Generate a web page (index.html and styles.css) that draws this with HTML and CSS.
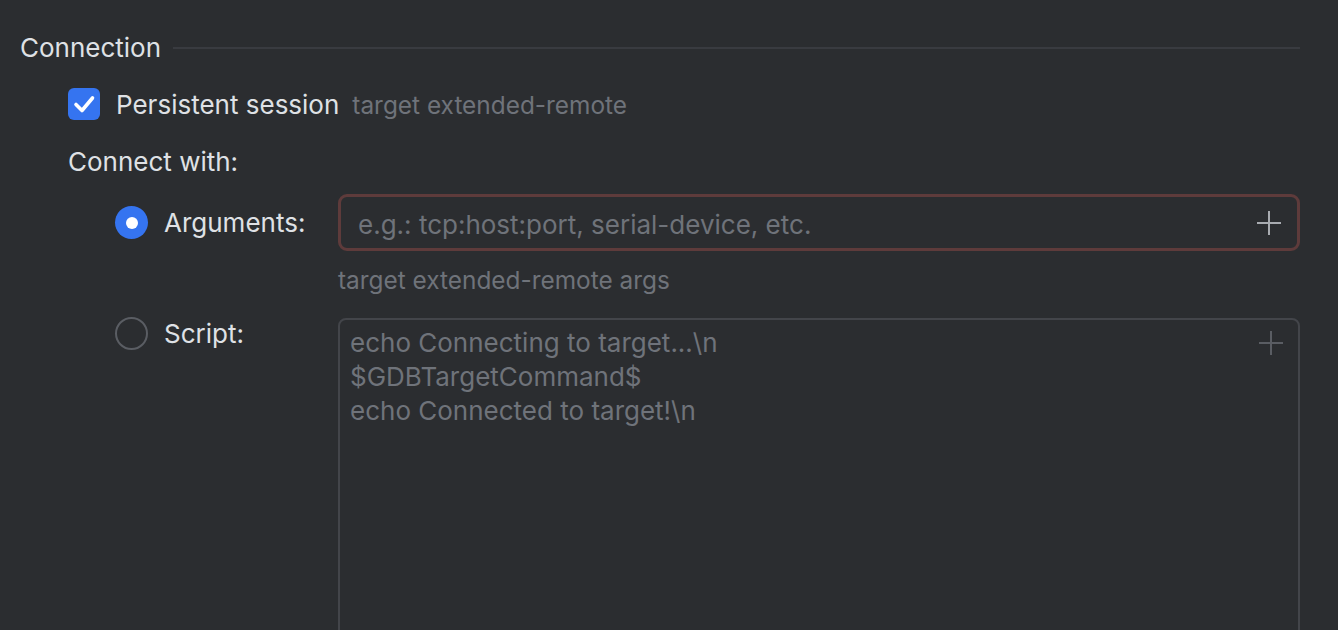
FILE: index.html
```html
<!DOCTYPE html>
<html lang="en">
<head>
    <meta charset="UTF-8">
    <meta name="viewport" content="width=device-width, initial-scale=1.0">
    <title>Connection</title>
    <link rel="stylesheet" href="styles.css">
</head>
<body>
    <div class="section">
        <div class="section-title">
            <span>Connection</span>
            <div class="separator"></div>
        </div>

        <div class="options">
            <label class="check-row">
                <span class="checkbox">
                    <svg width="32" height="32" viewBox="0 0 32 32">
                        <polyline points="8,16.5 14,22.5 24.5,10" fill="none" stroke="#fff" stroke-width="3.6" stroke-linecap="round" stroke-linejoin="round"/>
                    </svg>
                </span>
                <span class="label">Persistent session</span>
                <span class="hint">target extended-remote</span>
            </label>

            <div class="connect-label">Connect with:</div>

            <div class="connect">
                <label class="radio-row">
                    <span class="radio checked"></span>
                    <span class="label">Arguments:</span>
                </label>
                <div class="field-col">
                    <div class="input error">
                        <span class="placeholder">e.g.: tcp:host:port, serial-device, etc.</span>
                        <svg class="plus" width="24" height="24" viewBox="0 0 24 24">
                            <path d="M12 0V24M0 12H24" stroke="currentColor" stroke-width="2"/>
                        </svg>
                    </div>
                    <div class="field-hint">target extended-remote args</div>
                </div>

                <label class="radio-row script-row">
                    <span class="radio"></span>
                    <span class="label">Script:</span>
                </label>
                <div class="textarea">
                    <div class="lines">
                        <div>echo Connecting to target...\n</div>
                        <div>$GDBTargetCommand$</div>
                        <div>echo Connected to target!\n</div>
                    </div>
                    <svg class="plus" width="24" height="24" viewBox="0 0 24 24">
                        <path d="M12 0V24M0 12H24" stroke="currentColor" stroke-width="2"/>
                    </svg>
                </div>
            </div>
        </div>
    </div>
</body>
</html>
```

FILE: styles.css
```css
html, body {
    margin: 0;
    padding: 0;
    height: 100%;
    overflow: hidden;
}
body {
    background-color: #2b2d30;
    color: #dfe1e5;
    font-family: Inter, "Noto Sans", sans-serif;
    font-size: 26px;
}
.section {
    padding: 30px 38px 0 20px;
}
.section-title {
    display: flex;
    align-items: center;
    gap: 12px;
    height: 34px;
}
.separator {
    flex: 1;
    height: 2px;
    background-color: #393b40;
    margin-top: 2px;
}
.options {
    padding-left: 48px;
}
.check-row {
    display: flex;
    align-items: center;
    height: 34px;
    margin-top: 23px;
}
.checkbox {
    width: 32px;
    height: 32px;
    border-radius: 6px;
    background-color: #3574f0;
    display: flex;
}
.check-row .label {
    margin-left: 16px;
}
.hint {
    margin-left: 13px;
    margin-top: 2px;
    color: #6f737a;
    font-size: 24.4px;
}
.connect-label {
    margin-top: 24px;
    height: 34px;
    line-height: 34px;
}
.connect {
    display: grid;
    grid-template-columns: 223px 1fr;
    padding-left: 47px;
    margin-top: 15px;
}
.radio-row {
    display: flex;
    align-items: center;
    height: 57px;
}
.radio {
    width: 33px;
    height: 33px;
    box-sizing: border-box;
    border-radius: 50%;
    border: 2px solid #5a5d63;
    display: flex;
    align-items: center;
    justify-content: center;
}
.radio.checked {
    border: none;
    background-color: #3574f0;
}
.radio.checked::after {
    content: "";
    width: 12px;
    height: 12px;
    border-radius: 50%;
    background-color: #fff;
}
.radio-row .label {
    margin-left: 16px;
}
.script-row {
    height: 34px;
    margin-top: -2px;
}
.input {
    height: 57px;
    box-sizing: border-box;
    border: 3px solid #5e3b3b;
    border-radius: 9px;
    display: flex;
    align-items: center;
    padding: 0 16px 0 17px;
}
.placeholder {
    flex: 1;
    color: #6f737a;
    padding-top: 3px;
}
.input .plus {
    color: #a8abb0;
}
.field-hint {
    color: #6f737a;
    font-size: 24.4px;
    height: 34px;
    line-height: 34px;
    margin: 12px 0 21px 0;
}
.textarea {
    height: 400px;
    box-sizing: border-box;
    border: 2px solid #43454a;
    border-radius: 8px;
    display: flex;
    padding: 6px 15px 0 10px;
}
.lines {
    flex: 1;
    color: #6f737a;
    line-height: 34px;
}
.textarea .plus {
    color: #5a5d63;
    margin-top: 5px;
}
```
